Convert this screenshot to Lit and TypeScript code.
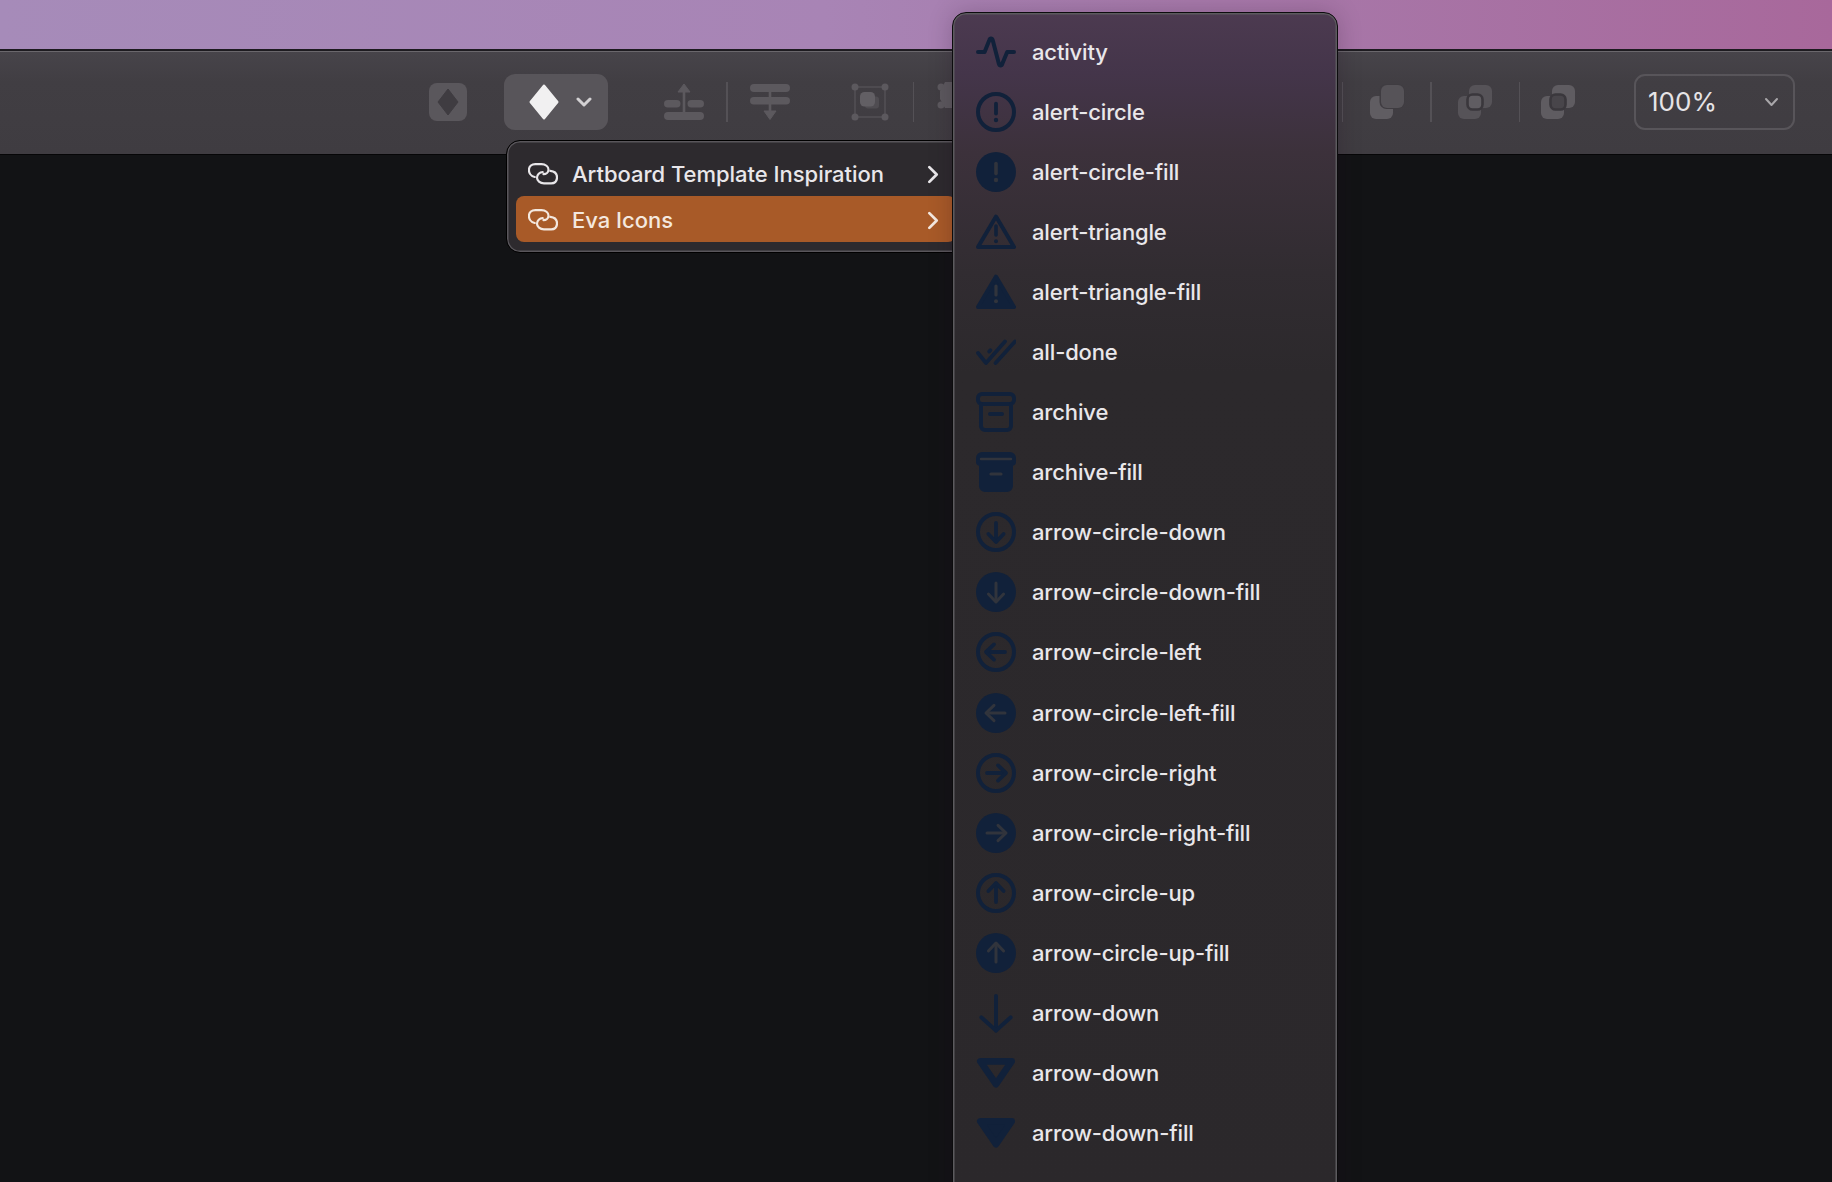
import { LitElement, html, css, svg } from "lit";
import { customElement } from "lit/decorators.js";

const circle = svg`<circle cx="12" cy="12" r="9" fill="none" stroke-width="2"/>`;
const disc = svg`<circle cx="12" cy="12" r="10" class="solid" stroke="none"/>`;
const arrowGlyph = (rot: number, fill: boolean) => svg`<g transform="rotate(${rot} 12 12)" fill="none" stroke-width="${fill ? 1.5 : 1.9}" class="${fill ? "cut" : ""}"><path d="M12 7.5V16.5"/><path d="M8.2 13L12 17L15.8 13"/></g>`;
const circleArrow = (rot: number) => svg`${circle}${arrowGlyph(rot, false)}`;
const discArrow = (rot: number) => svg`${disc}${arrowGlyph(rot, true)}`;

const ICONS: Record<string, unknown> = {
  activity: svg`<path fill="none" stroke-width="2" d="M3 12H6.3L8.6 6.2C9 5 10 5 10.4 6.2L13.4 17.8C13.8 19 14.8 19 15.2 17.8L17.6 12H21"/>`,
  "alert-circle": svg`${circle}<path fill="none" stroke-width="1.9" d="M12 7.8V12.8"/><circle cx="12" cy="16" r="1.1" class="solid" stroke="none"/>`,
  "alert-circle-fill": svg`${disc}<path class="cut" fill="none" stroke-width="1.8" d="M12 7.8V12.8"/><circle cx="12" cy="16" r="1.1" class="solidcut"/>`,
  "alert-triangle": svg`<path fill="none" stroke-width="2" d="M12 4.3L21 19.5H3Z"/><path fill="none" stroke-width="1.8" d="M12 9V13.5"/><circle cx="12" cy="16.6" r="1" class="solid" stroke="none"/>`,
  "alert-triangle-fill": svg`<path class="solid" stroke-width="2" d="M12 4.3L21 19.5H3Z"/><path class="cut" fill="none" stroke-width="1.6" d="M12 9V13.5"/><circle cx="12" cy="16.6" r="1" class="solidcut"/>`,
  "all-done": svg`<g fill="none" stroke-width="1.9"><path d="M3 12.5L7 17.5L16.5 6.7"/><path d="M11.8 17.5L21.5 6.7"/><path d="M8.6 11.8L9.2 11.1"/></g>`,
  archive: svg`<g fill="none" stroke-width="2"><rect x="3" y="3" width="18" height="5" rx="2"/><path d="M4.5 8V19A2 2 0 0 0 6.5 21H17.5A2 2 0 0 0 19.5 19V8"/><path d="M9 13H15"/></g>`,
  "archive-fill": svg`<path class="solid" stroke="none" d="M5 2H19A3 3 0 0 1 22 5V7A2 2 0 0 1 20.5 8.9V19A3 3 0 0 1 17.5 22H6.5A3 3 0 0 1 3.5 19V8.9A2 2 0 0 1 2 7V5A3 3 0 0 1 5 2Z"/><path class="cut" fill="none" stroke-width="1.2" d="M4.5 5.5H19.5"/><path class="cut" fill="none" stroke-width="1.6" d="M9.5 13H14.5"/>`,
  "arrow-circle-down": circleArrow(0),
  "arrow-circle-down-fill": discArrow(0),
  "arrow-circle-left": circleArrow(90),
  "arrow-circle-left-fill": discArrow(90),
  "arrow-circle-right": circleArrow(-90),
  "arrow-circle-right-fill": discArrow(-90),
  "arrow-circle-up": circleArrow(180),
  "arrow-circle-up-fill": discArrow(180),
  "arrow-down": svg`<g fill="none" stroke-width="2"><path d="M12 3.5V20.7"/><path d="M4.7 14.2L12 20.7L19.3 14.2"/></g>`,
  "arrow-down-tri": svg`<path fill="none" stroke-width="3.4" d="M4.2 6.2H19.8L12 17.6Z"/>`,
  "arrow-down-fill": svg`<path class="solid" stroke-width="3.4" d="M4.2 6.2H19.8L12 17.6Z"/>`,
};

const ROWS: [string, string][] = [
  ["activity", "activity"],
  ["alert-circle", "alert-circle"],
  ["alert-circle-fill", "alert-circle-fill"],
  ["alert-triangle", "alert-triangle"],
  ["alert-triangle-fill", "alert-triangle-fill"],
  ["all-done", "all-done"],
  ["archive", "archive"],
  ["archive-fill", "archive-fill"],
  ["arrow-circle-down", "arrow-circle-down"],
  ["arrow-circle-down-fill", "arrow-circle-down-fill"],
  ["arrow-circle-left", "arrow-circle-left"],
  ["arrow-circle-left-fill", "arrow-circle-left-fill"],
  ["arrow-circle-right", "arrow-circle-right"],
  ["arrow-circle-right-fill", "arrow-circle-right-fill"],
  ["arrow-circle-up", "arrow-circle-up"],
  ["arrow-circle-up-fill", "arrow-circle-up-fill"],
  ["arrow-down", "arrow-down"],
  ["arrow-down-tri", "arrow-down"],
  ["arrow-down-fill", "arrow-down-fill"],
];

const linkIcon = html`<svg class="link" viewBox="0 0 30 21.5" fill="none" stroke="currentColor" stroke-width="2.2" stroke-linecap="round">
  <path d="M6.7 14C2.3 13 .9 9.3 .9 7C.9 2.9 4 1.1 7.3 1.1H13.5C17.5 1.1 20.5 3.7 20.5 6.5C20.5 9.3 18 11.2 15.5 11.2"/>
  <path d="M22.3 7.8C27.3 8.3 29 11 29 14.3C29 18.3 26.7 20.3 23.3 20.3H16C12 20.3 9 17.5 9 14.8C9 11.5 11.7 9.2 14.7 9.2"/>
</svg>`;

const chevron = html`<svg class="chev" viewBox="0 0 11 18" fill="none" stroke="currentColor" stroke-width="2.6" stroke-linecap="round" stroke-linejoin="round"><path d="M2 2L9 9L2 16"/></svg>`;

@customElement("app-root")
export class AppRoot extends LitElement {
  static styles = css`
    :host {
      display: block;
      position: relative;
      width: 1832px;
      height: 1182px;
      overflow: hidden;
      background: #121315;
      font-family: Inter, "Liberation Sans", sans-serif;
      color: #e9e7ea;
    }
    .band {
      height: 49px;
      background: linear-gradient(90deg, #a68bb9 0%, #a884b5 45%, #a77aab 65%, #a8689b 100%);
    }
    .toolbar {
      height: 106px;
      box-sizing: border-box;
      display: flex;
      align-items: center;
      padding: 0 37px 2px 429px;
      background: linear-gradient(180deg, #47444a 0%, #413e43 30%, #3f3c41 100%);
      border-top: 2px solid #1d1b20;
      box-shadow: inset 0 1px 0 #6a676c;
      border-bottom: 1px solid #060607;
      color: #5c595e;
    }
    .small {
      width: 38px;
      height: 38px;
      border-radius: 8px;
      background: #5a575c;
      display: flex;
      align-items: center;
      justify-content: center;
    }
    .small svg { width: 22px; height: 28px; }
    .active {
      width: 104px;
      height: 56px;
      margin-left: 37px;
      border-radius: 11px;
      background: #58555a;
      display: flex;
      align-items: center;
      box-sizing: border-box;
      padding-left: 25px;
      gap: 17px;
    }
    .active .dia { width: 30px; height: 36px; }
    .active .down { width: 16px; height: 10px; color: #d3d1d3; }
    .t { width: 40px; height: 40px; flex: none; }
    .sq { width: 36px; height: 36px; flex: none; }
    .sep { width: 1.5px; height: 40px; background: #545156; flex: none; }
    .i1 { margin-left: 56px; }
    .s1 { margin-left: 22px; }
    .i2 { margin-left: 22px; }
    .i3 { margin-left: 60px; }
    .s2 { margin-left: 23px; }
    .i4 { margin-left: 23px; }
    .right { margin-left: auto; display: flex; align-items: center; }
    .a { margin-left: 26px; }
    .s4 { margin-left: 25px; }
    .b { margin-left: 25px; }
    .s5 { margin-left: 26px; }
    .c { margin-left: 20px; }
    .select {
      margin-left: 58px;
      width: 161px;
      height: 56px;
      box-sizing: border-box;
      border: 2px solid #58555a;
      border-radius: 11px;
      display: flex;
      align-items: center;
      justify-content: space-between;
      padding: 0 14px 0 12px;
      font-size: 26px;
      color: #e6e4e7;
    }
    .select svg { width: 15px; height: 10px; color: #a9a7aa; }

    .menu {
      position: absolute;
      left: 506px;
      top: 140px;
      width: 460px;
      height: 113px;
      box-sizing: border-box;
      padding: 9px 9px;
      border-radius: 14px;
      background: #2d2a2e;
      border: 1px solid #000;
      box-shadow: inset 0 0 0 1.5px #59565b;
    }
    .mrow {
      height: 46px;
      box-sizing: border-box;
      display: flex;
      align-items: center;
      padding: 2px 0 0 12px;
      border-radius: 8px;
      font-size: 22px;
      font-weight: 450;
      letter-spacing: -0.02px;
      position: relative;
    }
    .mrow.hl { background: #a85a28; color: #f4e8df; }
    .link { width: 30px; height: 21.5px; margin-right: 14px; }
    .chev { position: absolute; left: 411px; top: 15px; width: 12px; height: 19px; }

    .sub {
      position: absolute;
      left: 952px;
      top: 12px;
      width: 386px;
      height: 1200px;
      box-sizing: border-box;
      padding: 9px 0 0 23px;
      border-radius: 14px;
      border: 1px solid #0c0c0d;
      box-shadow: inset 0 0 0 1.5px #5c5a5e, 0 0 24px rgba(30, 10, 30, 0.22);
      background: linear-gradient(180deg, #4c3a50 0px, #44354a 60px, #3c313b 140px, #312c31 260px, #2c292c 360px, #2b282b 100%);
    }
    .row {
      height: 60.05px;
      display: flex;
      align-items: center;
      font-size: 22px;
      font-weight: 450;
      letter-spacing: -0.15px;
    }
    .row svg {
      width: 40px;
      height: 40px;
      margin-right: 16px;
      stroke: #11213a;
      stroke-linecap: round;
      stroke-linejoin: round;
      flex: none;
    }
    .row svg .solid { fill: #11213a; }
    .row svg .cut { stroke: #31343c; }
    .row svg .solidcut { fill: #31343c; stroke: none; }
  `;

  render() {
    return html`
      <div class="band"></div>
      <div class="toolbar">
        <div class="small"><svg viewBox="0 0 22 28"><path d="M11 1L21 14L11 27L1 14Z" fill="#3f3c41" stroke="#3f3c41" stroke-linejoin="round"/></svg></div>
        <div class="active">
          <svg class="dia" viewBox="0 0 30 36"><path d="M15 1.5L28.5 18L15 34.5L1.5 18Z" fill="#f1f0f1" stroke="#f1f0f1" stroke-width="2" stroke-linejoin="round"/></svg>
          <svg class="down" viewBox="0 0 16 10" fill="none" stroke="currentColor" stroke-width="3" stroke-linecap="round" stroke-linejoin="round"><path d="M2 2L8 8L14 2"/></svg>
        </div>
        <svg class="t i1" viewBox="0 0 40 40" fill="currentColor">
          <path d="M20 2L26 10H14Z" stroke="currentColor" stroke-linejoin="round"/><rect x="18.7" y="8" width="2.6" height="22"/>
          <rect x="0" y="18" width="16.5" height="7.5" rx="3.75"/><rect x="23.5" y="18" width="16.5" height="7.5" rx="3.75"/>
          <rect x="0" y="30" width="40" height="8" rx="4"/>
        </svg>
        <div class="sep s1"></div>
        <svg class="t i2" viewBox="0 0 40 40" fill="currentColor">
          <rect x="0" y="2" width="40" height="8" rx="4"/><rect x="0" y="15" width="40" height="7.5" rx="3.75"/>
          <rect x="18.7" y="9" width="2.6" height="22"/><path d="M20 37.5L14 29H26Z" stroke="currentColor" stroke-linejoin="round"/>
        </svg>
        <svg class="t i3" viewBox="0 0 40 40">
          <rect x="5" y="5" width="30" height="30" fill="none" stroke="#4e4b50" stroke-width="2"/>
          <g fill="#5c595e"><circle cx="5" cy="5" r="3.5"/><circle cx="35" cy="5" r="3.5"/><circle cx="5" cy="35" r="3.5"/><circle cx="35" cy="35" r="3.5"/></g>
          <path d="M25.5 13H27A3 3 0 0 1 30 16V22A3 3 0 0 1 27 25H19A3 3 0 0 1 16 22V20.5H22A3.5 3.5 0 0 0 25.5 17Z" fill="#4f4c51" transform="translate(-1 1.5)"/>
          <rect x="10" y="10" width="15" height="14.5" rx="4.5" fill="#625f64"/>
        </svg>
        <div class="sep s2"></div>
        <svg class="t i4" viewBox="0 0 40 40" fill="currentColor">
          <circle cx="4" cy="5" r="3.5"/><circle cx="4" cy="23" r="3.5"/>
          <path d="M8 0H30V26H8L3 17V9Z"/>
        </svg>
        <div class="right">
          <div class="sep"></div>
          <svg class="sq a" viewBox="0 0 36 36">
            <rect x="1" y="12" width="23" height="23" rx="6" fill="#605d62"/>
            <rect x="10.5" y="0" width="25" height="25" rx="7" fill="#3f3c41"/>
            <rect x="12" y="1" width="23" height="23" rx="6" fill="#565358"/>
          </svg>
          <div class="sep s4"></div>
          <svg class="sq b" viewBox="0 0 36 36">
            <rect x="12" y="1" width="23" height="23" rx="6" fill="#565358"/>
            <rect x="1" y="12" width="23" height="23" rx="6" fill="#565358"/>
            <rect x="10.5" y="10.5" width="15" height="15" rx="5" fill="#605d62" stroke="#3a373c" stroke-width="2.6"/>
          </svg>
          <div class="sep s5"></div>
          <svg class="sq c" viewBox="0 0 36 36">
            <rect x="12" y="1" width="23" height="23" rx="6" fill="#5f5c61"/>
            <rect x="1" y="12" width="23" height="23" rx="6" fill="#5f5c61"/>
            <rect x="10.5" y="10.5" width="15" height="15" rx="5" fill="#48454a" stroke="#3a373c" stroke-width="2.6"/>
          </svg>
          <div class="select">
            <span>100%</span>
            <svg viewBox="0 0 15 10" fill="none" stroke="currentColor" stroke-width="2" stroke-linecap="round" stroke-linejoin="round"><path d="M2 2L7.5 8L13 2"/></svg>
          </div>
        </div>
      </div>

      <div class="menu">
        <div class="mrow">${linkIcon}<span>Artboard Template Inspiration</span>${chevron}</div>
        <div class="mrow hl">${linkIcon}<span>Eva Icons</span>${chevron}</div>
      </div>

      <div class="sub">
        ${ROWS.map(([k, label]) => html`<div class="row"><svg viewBox="2 2 20 20">${ICONS[k]}</svg><span>${label}</span></div>`)}
      </div>
    `;
  }
}
